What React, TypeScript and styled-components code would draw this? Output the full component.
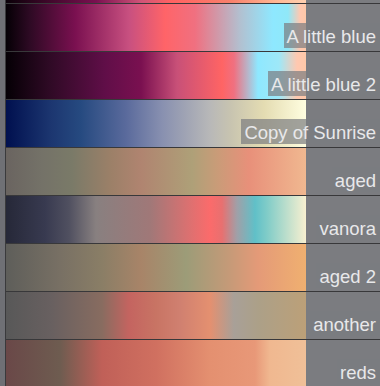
import React from "react";
import styled, { createGlobalStyle } from "styled-components";

const Global = createGlobalStyle`
  html, body { margin: 0; padding: 0; background: #7b7c80; overflow: hidden; }
  body { font-family: "Liberation Sans", Arial, sans-serif; }
`;

const Frame = styled.div`
  display: flex;
  width: 380px;
  height: 386px;
  overflow: hidden;
  background: #7b7c80;
`;

const Gutter = styled.div`
  width: 5px;
  flex: none;
  background: #6f7075;
  border-right: 1px solid #3a3a3c;
`;

const List = styled.div`
  flex: 1;
  display: flex;
  flex-direction: column;
  margin-top: -44px;
`;

const Row = styled.div`
  position: relative;
  display: flex;
  height: 47px;
  flex: none;
  border-bottom: 1px solid #38383a;
`;

const Swatch = styled.div<{ $stops: string }>`
  width: 300px;
  flex: none;
  background: linear-gradient(to right, ${(p) => p.$stops});
`;

const Panel = styled.div`
  flex: 1;
  background: #7b7c80;
`;

const Label = styled.span`
  position: absolute;
  right: 0;
  bottom: 3px;
  height: 23px;
  padding: 2px 4px 0 3px;
  line-height: 23px;
  font-size: 18.5px;
  color: #e8e8ea;
  white-space: nowrap;
  background: rgba(123, 124, 128, 0.7);
`;

const gradients: { name: string; stops: string }[] = [
  {
    name: "Purple sunset",
    stops:
      "#0a0008 0%, #7a1050 30%, #d05478 45%, #ff6262 55%, #f8806c 75%, #ffb894 90%, #ffd0b0 100%",
  },
  {
    name: "A little blue",
    stops:
      "#050005 0%, #2e0a24 8%, #7a1050 23%, #c85080 41%, #ff6468 53%, #f07080 63%, #b2c0d0 78%, #8ee8ff 89%, #90e8f8 94%, #ffc8b0 98%, #ffc8a8 100%",
  },
  {
    name: "A little blue 2",
    stops:
      "#050005 0%, #300a26 15%, #600e48 33%, #7a1050 45%, #c85078 57%, #ff6464 72%, #f07080 76%, #8ee8ff 84%, #9ee8f8 91%, #ffc8b0 97%, #ffc8a8 100%",
  },
  {
    name: "Copy of Sunrise",
    stops:
      "#00104f 0%, #1c3670 15%, #264a80 25%, #5a6a9c 40%, #8890b0 52%, #b8b8b8 68%, #c8c4b0 75%, #e4dcb2 86%, #fffee0 100%",
  },
  {
    name: "aged",
    stops:
      "#6a6460 0%, #747268 12%, #7a7a68 22%, #9c8068 35%, #b08470 45%, #aea078 62%, #c89c78 70%, #e8907a 81%, #f0b890 100%",
  },
  {
    name: "vanora",
    stops:
      "#262838 0%, #383a50 13%, #505060 21%, #888080 30%, #a07878 48%, #e07070 62%, #fb6b6b 68%, #e87070 72%, #a0a0a8 77%, #60c0c8 83%, #80ccc8 87%, #f8f0d0 100%",
  },
  {
    name: "aged 2",
    stops:
      "#5e5e5a 0%, #787064 18%, #8a7e66 32%, #a88468 45%, #9c9c78 60%, #c49a78 74%, #e49a78 84%, #f0b070 100%",
  },
  {
    name: "another",
    stops:
      "#585858 0%, #686060 15%, #886c60 32%, #c46460 41%, #c87464 50%, #d08070 58%, #e49070 68%, #a8a098 76%, #aca088 84%, #bca078 100%",
  },
  {
    name: "reds",
    stops:
      "#6a4848 0%, #6e5c50 18%, #c06058 32%, #d07060 50%, #e49070 68%, #e89878 83%, #f0b890 88%, #f0c098 100%",
  },
];

export default function App() {
  return (
    <>
      <Global />
      <Frame>
        <Gutter />
        <List>
          {gradients.map((g) => (
            <Row key={g.name}>
              <Swatch $stops={g.stops} />
              <Panel />
              <Label>{g.name}</Label>
            </Row>
          ))}
        </List>
      </Frame>
    </>
  );
}
